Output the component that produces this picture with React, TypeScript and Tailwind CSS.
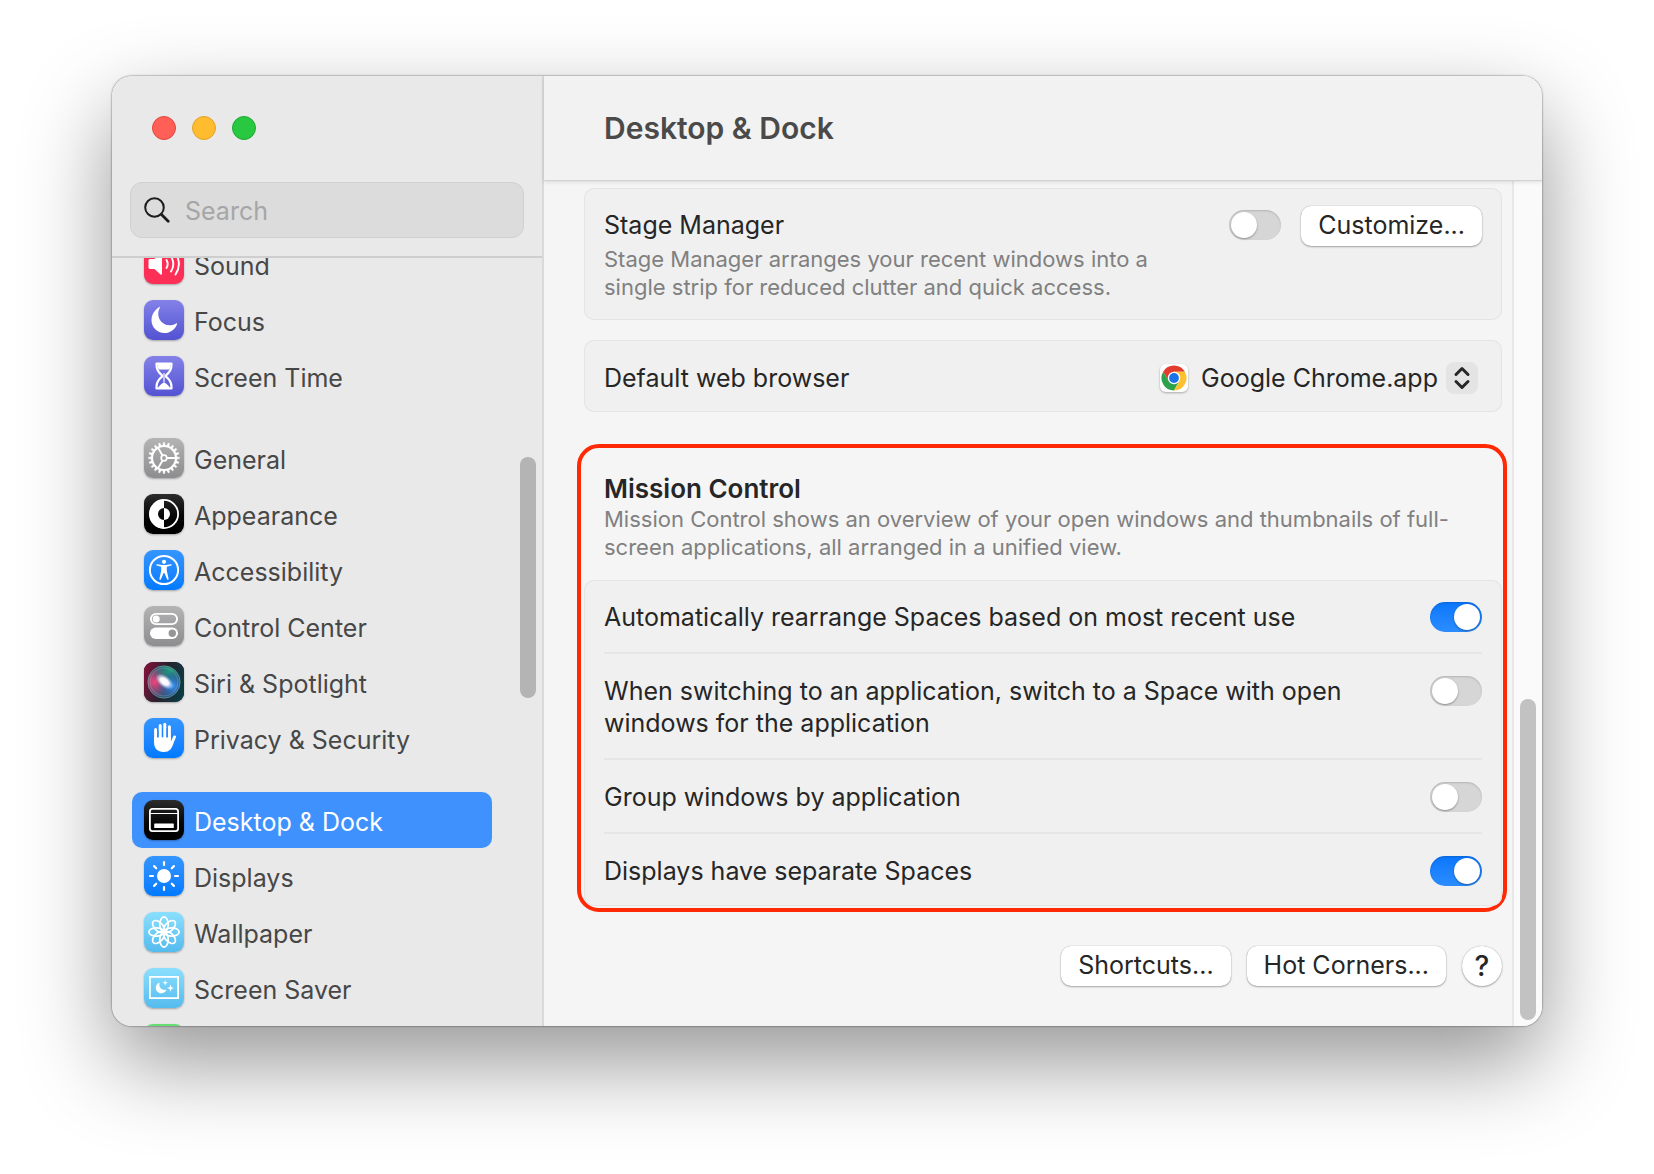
import React from "react";

const petals = [0, 45, 90, 135, 180, 225, 270, 315];
const teeth = Array.from({ length: 20 }, (_, i) => i * 18);

function SoundGlyph() {
  return (
    <svg viewBox="0 0 40 40" className="size-10" fill="none" stroke="#fff" strokeLinecap="round">
      <path d="M4.500 16.500c0-.8.600-1.500 1.500-1.500H10.500L16.500 9.500c.7-.6 1.500-.2 1.500.7V29.800c0 .9-.8 1.300-1.500.7L10.500 25H6C5.100 25 4.500 24.300 4.500 23.500Z" fill="#fff" stroke="none" />
      <path d="M22.500 16c1.500 2.500 1.500 5.500 0 8" strokeWidth="1.900" />
      <path d="M27 12.500c2.900 4.700 2.900 10.300 0 15" strokeWidth="1.900" />
      <path d="M31.500 9.500c4.300 6.600 4.300 14.400 0 21" strokeWidth="1.900" />
    </svg>
  );
}

function MoonGlyph() {
  return (
    <svg viewBox="0 0 40 40" className="size-10" fill="#fff">
      <path d="M16 7.400C14.400 10 13.800 13.200 14.500 16.200c1.400 6.400 7.700 10.200 14 8.700 1.500-.3 2.800-.9 4-1.600.4-.2.800.1.600.6C31.300 29.200 26.300 33 20.300 33 13.300 33 7.500 27.300 7.500 20.200c0-6 3.600-11 8-13.300.5-.2.800.1.500.5Z" />
    </svg>
  );
}

function HourglassGlyph() {
  return (
    <svg viewBox="0 0 40 40" className="size-10" fill="none" stroke="#fff">
      <path d="M12.500 7.500h15v1.500c0 5-2 7.500-5.500 10.300v1.400c3.500 2.800 5.500 5.300 5.500 10.300v1.500h-15V31c0-5 2-7.500 5.500-10.300v-1.400C14.500 16.500 12.500 14 12.500 9Z" strokeWidth="2.200" strokeLinejoin="round" />
      <path d="M13.500 8h13c0 2.500-.4 4-1.200 5.500H14.700C13.900 12 13.500 10.500 13.500 8Z" fill="#fff" stroke="none" />
      <path d="M14 32c.6-1.900 3.400-4.500 6-5.800 2.600 1.300 5.400 3.900 6 5.800Z" fill="#fff" stroke="none" />
      <path d="M20 17v9" strokeWidth="1.200" />
    </svg>
  );
}

function GearGlyph() {
  return (
    <svg viewBox="0 0 40 40" className="size-10" fill="none" stroke="#fff">
      <circle cx="20" cy="20" r="12" strokeWidth="2.100" />
      {teeth.map((a) => (
        <path key={a} d="M18.900 7.600L19.400 4.600h1.200L21.100 7.600Z" fill="#fff" strokeWidth=".6" transform={`rotate(${a} 20 20)`} />
      ))}
      <circle cx="20" cy="20" r="2.800" strokeWidth="1.700" />
      {[90, 210, 330].map((a) => (
        <path key={a} d="M20 17V8" strokeWidth="1.900" transform={`rotate(${a} 20 20)`} />
      ))}
    </svg>
  );
}

function AppearanceGlyph() {
  return (
    <svg viewBox="0 0 40 40" className="size-10">
      <circle cx="20" cy="20" r="14.100" fill="none" stroke="#fff" strokeWidth="1.800" />
      <path d="M20 5.500a14.500 14.500 0 0 0 0 29V26a6 6 0 0 1 0-12Z" fill="#fff" />
      <path d="M20 14a6 6 0 0 1 0 12Z" fill="#fff" />
    </svg>
  );
}

function AccessibilityGlyph() {
  return (
    <svg viewBox="0 0 40 40" className="size-10">
      <circle cx="20" cy="20" r="14.100" fill="none" stroke="#fff" strokeWidth="2" />
      <circle cx="20" cy="11.800" r="2.100" fill="#fff" />
      <path d="M13 14.200l5 .7h4l5-.7c.9-.1 1.200 1 .2 1.300l-4.400 1.200v4l1.800 8c.2 1.100-1.100 1.400-1.500.5L20.400 23h-.8l-2.700 6.200c-.4.900-1.700.6-1.500-.5l1.800-8v-4l-4.400-1.200c-1-.3-.7-1.400.2-1.300Z" fill="#fff" />
    </svg>
  );
}

function ControlGlyph() {
  return (
    <svg viewBox="0 0 40 40" className="size-10">
      <rect x="6.900" y="7.900" width="26.200" height="10.200" rx="5.100" fill="none" stroke="#fff" strokeWidth="1.900" />
      <circle cx="12.200" cy="13" r="3.500" fill="#fff" />
      <rect x="6" y="21.500" width="28" height="11.500" rx="5.750" fill="#fff" />
      <circle cx="28.300" cy="27.200" r="3.700" fill="#969696" />
    </svg>
  );
}

function SiriGlyph() {
  return (
    <svg viewBox="0 0 40 40" className="size-10">
      <defs>
        <linearGradient id="siri-bg" x1="0" y1=".3" x2="1" y2=".6">
          <stop offset="0" stopColor="#7d1239" />
          <stop offset=".5" stopColor="#26222f" />
          <stop offset="1" stopColor="#0c3c43" />
        </linearGradient>
        <radialGradient id="siri-pink" cx=".2" cy=".5" r=".5">
          <stop offset="0" stopColor="#f0467a" />
          <stop offset="1" stopColor="#d0386e" stopOpacity="0" />
        </radialGradient>
        <radialGradient id="siri-green" cx=".68" cy=".15" r=".5">
          <stop offset="0" stopColor="#1f9a7c" />
          <stop offset="1" stopColor="#1f8a7c" stopOpacity="0" />
        </radialGradient>
        <radialGradient id="siri-blue" cx=".76" cy=".62" r=".45">
          <stop offset="0" stopColor="#3b9dff" />
          <stop offset="1" stopColor="#1c4fa0" stopOpacity="0" />
        </radialGradient>
        <radialGradient id="siri-core" cx=".5" cy=".5" r=".5">
          <stop offset="0" stopColor="#fff" />
          <stop offset=".45" stopColor="#fff" stopOpacity=".95" />
          <stop offset="1" stopColor="#c8d8ff" stopOpacity="0" />
        </radialGradient>
      </defs>
      <rect width="40" height="40" fill="url(#siri-bg)" />
      <circle cx="20" cy="20" r="16" fill="#36587a" />
      <circle cx="20" cy="20" r="16" fill="url(#siri-pink)" />
      <circle cx="20" cy="20" r="16" fill="url(#siri-green)" />
      <circle cx="20" cy="20" r="16" fill="url(#siri-blue)" />
      <ellipse cx="20.500" cy="19.500" rx="10.500" ry="6" fill="url(#siri-core)" transform="rotate(38 20.500 19.500)" />
      <circle cx="20" cy="20" r="16.200" fill="none" stroke="#7fd0c0" strokeOpacity=".5" strokeWidth="1" />
      <circle cx="20" cy="20" r="14" fill="none" stroke="#fff" strokeOpacity=".22" strokeWidth=".8" />
    </svg>
  );
}

function HandGlyph() {
  return (
    <svg viewBox="0 0 40 40" className="size-10" fill="none" stroke="#fff" strokeLinecap="round" strokeLinejoin="round">
      <path d="M11.600 11.500V24M16.200 7.600V21M20.800 6.300V21M25.400 8.700V22" strokeWidth="3" />
      <path d="M30.500 19l-2.800 6.500" strokeWidth="3" />
      <path d="M10.100 19h16.800v5l2.500 1.500c-1 2.800-1.800 4.600-3 6C24.800 33.200 22.500 34 19.500 34 13.700 34 10.100 30.600 10.100 24.500Z" fill="#fff" stroke="none" />
      <path d="M13.900 12v7.500M18.500 10v9M23.100 10.500v9" stroke="#1a86ff" strokeWidth=".9" />
    </svg>
  );
}

function DockGlyph() {
  return (
    <svg viewBox="0 0 40 40" className="size-10">
      <rect x="5.900" y="8.900" width="28.200" height="22.200" rx="2.600" fill="none" stroke="#fff" strokeWidth="1.800" />
      <path d="M6 13.500h28" stroke="#fff" strokeWidth="1.200" />
      <rect x="10.200" y="23.500" width="19.600" height="4.500" rx=".6" fill="#fff" />
    </svg>
  );
}

function SunGlyph() {
  return (
    <svg viewBox="0 0 40 40" className="size-10">
      <circle cx="20" cy="20" r="7" fill="#fff" />
      {petals.map((a) => (
        <path key={a} d="M20 6v3" stroke="#fff" strokeWidth="2.200" strokeLinecap="round" transform={`rotate(${a} 20 20)`} />
      ))}
    </svg>
  );
}

function FlowerGlyph() {
  return (
    <svg viewBox="0 0 40 40" className="size-10" fill="none" stroke="#fff" strokeWidth="1.700">
      {petals.map((a) => (
        <ellipse key={a} cx="20" cy="12.300" rx="4.200" ry="7.400" transform={`rotate(${a} 20 20)`} />
      ))}
    </svg>
  );
}

function ScreenSaverGlyph() {
  return (
    <svg viewBox="0 0 40 40" className="size-10">
      <rect x="5.900" y="8.900" width="28.200" height="21.200" fill="none" stroke="#fff" strokeWidth="1.800" />
      <path d="M15.600 14.500c-1.200 4.600 2 8.200 6.900 7.300-.9 2.200-3 3.500-5.200 3.500-3.100 0-5.500-2.400-5.500-5.500 0-2.400 1.500-4.500 3.800-5.300Z" fill="#fff" />
      <path d="M21.200 12l.7 2.100 2.100.7-2.100.7-.7 2.100-.7-2.100-2.100-.7 2.100-.7ZM26.500 16.500l.9 2.700 2.700.9-2.700.9-.9 2.700-.9-2.700-2.700-.9 2.700-.9Z" fill="#fff" />
    </svg>
  );
}

function BatteryGlyph() {
  return (
    <svg viewBox="0 0 40 40" className="size-10">
      <rect x="6" y="13" width="25" height="14" rx="4" fill="#fff" />
    </svg>
  );
}

const purple = "bg-linear-to-b from-[#8481e8] to-[#5452d2]";
const gray = "bg-linear-to-b from-[#b4b4b5] to-[#8d8d8f]";
const blue = "bg-linear-to-b from-[#3395ff] to-[#007aff]";
const black = "bg-linear-to-b from-[#2c2c2c] to-[#000000]";
const sky = "bg-linear-to-b from-[#8bdffd] to-[#54bbee]";

const groups = [
  [
    { label: "Sound", tile: "bg-[#fd2f57]", Glyph: SoundGlyph },
    { label: "Focus", tile: purple, Glyph: MoonGlyph },
    { label: "Screen Time", tile: purple, Glyph: HourglassGlyph },
  ],
  [
    { label: "General", tile: gray, Glyph: GearGlyph },
    { label: "Appearance", tile: black, Glyph: AppearanceGlyph },
    { label: "Accessibility", tile: blue, Glyph: AccessibilityGlyph },
    { label: "Control Center", tile: gray, Glyph: ControlGlyph },
    { label: "Siri & Spotlight", tile: "bg-[#26222f]", Glyph: SiriGlyph },
    { label: "Privacy & Security", tile: blue, Glyph: HandGlyph },
  ],
  [
    { label: "Desktop & Dock", tile: black, Glyph: DockGlyph, active: true },
    { label: "Displays", tile: blue, Glyph: SunGlyph },
    { label: "Wallpaper", tile: sky, Glyph: FlowerGlyph },
    { label: "Screen Saver", tile: sky, Glyph: ScreenSaverGlyph },
    { label: "", tile: "bg-[#66de73]", Glyph: BatteryGlyph },
  ],
];

function Sidebar() {
  return (
    <aside className="relative flex w-[432px] shrink-0 flex-col border-r-2 border-[#d9d9d9] bg-[#e9e9e9]">
      <div className="flex gap-4 px-10 pt-10">
        <button aria-label="Close" className="size-6 rounded-full border border-[#e2463f] bg-[#ff5f57]" />
        <button aria-label="Minimize" className="size-6 rounded-full border border-[#e1a325] bg-[#febc2e]" />
        <button aria-label="Zoom" className="size-6 rounded-full border border-[#1fa833] bg-[#28c840]" />
      </div>
      <label className="mx-[18px] mt-[42px] flex h-14 items-center gap-[15px] rounded-xl border border-[#d0d0d0] bg-[#dcdcdc] px-[13px]">
        <svg viewBox="0 0 26 26" className="size-[26px] shrink-0" fill="none" stroke="#1c1c1c" strokeLinecap="round">
          <circle cx="10.500" cy="10.500" r="9.300" strokeWidth="2" />
          <path d="M17.500 17.500l6.700 6.700" strokeWidth="2.800" />
        </svg>
        <input type="text" aria-label="Search" placeholder="Search" className="min-w-0 flex-1 bg-transparent pt-[3px] text-[25px] text-[#262626] outline-none placeholder:text-[#a6a6a6]" />
      </label>
      <nav className="mt-[18px] min-h-0 flex-1 overflow-hidden border-t-2 border-[#cecece]">
        <div className="-mt-[22px] flex flex-col gap-[26px] pr-[50px] pl-5">
          {groups.map((items, i) => (
            <ul key={i}>
              {items.map(({ label, tile, Glyph, active }: any) => (
                <li key={label}>
                  <a
                    href="#"
                    aria-label={label || "Battery"}
                    aria-current={active ? "page" : undefined}
                    className={`flex h-14 items-center gap-2.5 rounded-[10px] px-3 text-[25px] leading-8 ${active ? "bg-[#3f92fe] text-white" : "text-[#474747]"}`}
                  >
                    <span className={`size-10 shrink-0 overflow-hidden rounded-[9px] shadow-[0_1px_2px_rgba(0,0,0,0.3)] ${tile}`}>
                      <Glyph />
                    </span>
                    <span className="pt-[3px]">{label}</span>
                  </a>
                </li>
              ))}
            </ul>
          ))}
        </div>
      </nav>
      <div className="absolute top-[381px] right-1.5 h-[241px] w-4 rounded-full bg-[#b4b4b4]" />
    </aside>
  );
}

function Toggle({ id, on = false }: { id: string; on?: boolean }) {
  return (
    <input
      id={id}
      type="checkbox"
      role="switch"
      defaultChecked={on}
      className="mt-px h-[30px] w-[52px] shrink-0 appearance-none rounded-full bg-[#d6d6d6] p-0.5 shadow-[inset_0_1px_2px_rgba(0,0,0,0.16)] before:block before:size-[26px] before:rounded-full before:bg-white before:shadow-[0_1px_2px_rgba(0,0,0,0.35)] before:content-[''] checked:bg-linear-to-b checked:from-[#0a76fb] checked:to-[#2a8dff] checked:before:ml-[22px]"
    />
  );
}

function PushButton({ children, className = "" }: { children: React.ReactNode; className?: string }) {
  return (
    <button className={`h-10 rounded-[10px] bg-white px-[17px] pb-0.5 text-[25px] leading-8 text-[#262626] shadow-[0_0_1px_rgba(0,0,0,0.35),0_1px_2px_rgba(0,0,0,0.3)] ${className}`}>
      {children}
    </button>
  );
}

function ChromeLogo() {
  return (
    <svg viewBox="0 0 30 30" className="size-[30px] drop-shadow-[0_1px_1px_rgba(0,0,0,0.3)]">
      <rect x="1" y="1" width="28" height="28" rx="6" fill="#fff" />
      <path d="M4.170 8.750A12.500 12.500 0 0 1 25.830 8.750H15L9.600 18.100Z" fill="#e33b2e" />
      <path d="M4.170 8.750A12.500 12.500 0 0 0 15 27.500L20.400 18.100 15 15 9.600 18.100Z" fill="#2da14c" />
      <path d="M25.830 8.750A12.500 12.500 0 0 1 15 27.500l5.400-9.400L15 8.750Z" fill="#fdc02f" />
      <circle cx="15" cy="15" r="6.200" fill="#fff" />
      <circle cx="15" cy="15" r="4.900" fill="#1a73e8" />
    </svg>
  );
}

const card = "rounded-[10px] bg-[#f0f0f0] px-5 shadow-[inset_0_0_0_1px_#e4e4e4]";

const options = [
  { id: "rearrange", label: "Automatically rearrange Spaces based on most recent use", on: true },
  { id: "switching", label: "When switching to an application, switch to a Space with open windows for the application" },
  { id: "group", label: "Group windows by application" },
  { id: "separate", label: "Displays have separate Spaces", on: true },
];

export default function App() {
  return (
    <div className="flex h-screen bg-white px-28 pt-[76px] pb-[148px] font-['Inter',sans-serif] text-[#262626]">
      <div className="flex min-w-0 flex-1 rounded-[20px] shadow-[0_0_2px_rgba(0,0,0,0.7),0_36px_88px_rgba(0,0,0,0.42)]">
        <div className="flex min-w-0 flex-1 overflow-hidden rounded-[20px]">
          <Sidebar />
          <main className="flex min-w-0 flex-1 flex-col bg-[#f5f5f5]">
            <header className="relative flex h-[104px] shrink-0 items-center bg-[#f2f2f2] px-[60px] shadow-[0_1px_0_#d2d2d2,0_2px_4px_rgba(0,0,0,0.12)]">
              <h1 className="text-[30px] font-semibold text-[#4a4a4a]">Desktop &amp; Dock</h1>
            </header>
            <div className="flex min-h-0 flex-1">
              <div className="min-w-0 flex-1 overflow-hidden pt-2 pr-2.5 pl-10">
                <section className={`${card} flex items-start gap-5 pt-[21px] pb-[19px]`}>
                  <div className="min-w-0 flex-1">
                    <label htmlFor="stage" className="block text-[25px] leading-8">Stage Manager</label>
                    <p className="mt-1 max-w-[560px] text-[22px] leading-7 text-[#808080]">
                      Stage Manager arranges your recent windows into a single strip for reduced clutter and quick access.
                    </p>
                  </div>
                  <Toggle id="stage" />
                  <PushButton className="-mt-[3px]">Customize...</PushButton>
                </section>

                <section className={`${card} mt-5 flex h-[72px] items-center pt-[3px]`}>
                  <label htmlFor="browser" className="flex-1 text-[25px] leading-8">Default web browser</label>
                  <ChromeLogo />
                  <div className="relative mr-1 ml-3">
                    <select id="browser" className="block h-8 appearance-none bg-transparent pr-10 text-[25px] leading-8 outline-none">
                      <option>Google Chrome.app</option>
                    </select>
                    <span className="pointer-events-none absolute top-0 right-0 size-8 rounded-lg bg-[#e4e4e4]">
                      <svg viewBox="0 0 32 32" className="size-8" fill="none" stroke="#262626" strokeWidth="3" strokeLinecap="round" strokeLinejoin="round">
                        <path d="M10 12.500l6-6 6 6M10 19.500l6 6 6-6" />
                      </svg>
                    </span>
                  </div>
                </section>

                <section className="-mr-[5px] -ml-[7px] mt-8 rounded-[22px] border-4 border-[#ff2a05] pt-[25px] pr-px pb-0.5 pl-[3px]">
                  <div className="px-5 pb-[19px]">
                    <h2 className="text-[26px] leading-8 font-semibold">Mission Control</h2>
                    <p className="text-[22px] leading-7 text-[#808080]">
                      Mission Control shows an overview of your open windows and thumbnails of full-screen applications, all arranged in a unified view.
                    </p>
                  </div>
                  <div className={`${card} divide-y-2 divide-[#e6e6e6]`}>
                    {options.map((o) => (
                      <div key={o.id} className="flex items-start justify-between gap-5 pt-[21px] pb-[19px]">
                        <label htmlFor={o.id} className="max-w-[770px] text-[25px] leading-8">{o.label}</label>
                        <Toggle id={o.id} on={o.on} />
                      </div>
                    ))}
                  </div>
                </section>

                <div className="mt-[34px] flex justify-end gap-4">
                  <PushButton>Shortcuts...</PushButton>
                  <PushButton>Hot Corners...</PushButton>
                  <button aria-label="Help" className="size-10 rounded-full bg-white text-[28px] leading-10 font-medium shadow-[0_0_1px_rgba(0,0,0,0.35),0_1px_2px_rgba(0,0,0,0.3)]">?</button>
                </div>
              </div>
              <div className="flex w-[30px] shrink-0 items-end border-l-2 border-[#e8e8e8] bg-[#fafafa] pb-1.5 pl-1.5">
                <div className="h-[321px] w-4 rounded-full bg-[#c2c2c2]" />
              </div>
            </div>
          </main>
        </div>
      </div>
    </div>
  );
}
